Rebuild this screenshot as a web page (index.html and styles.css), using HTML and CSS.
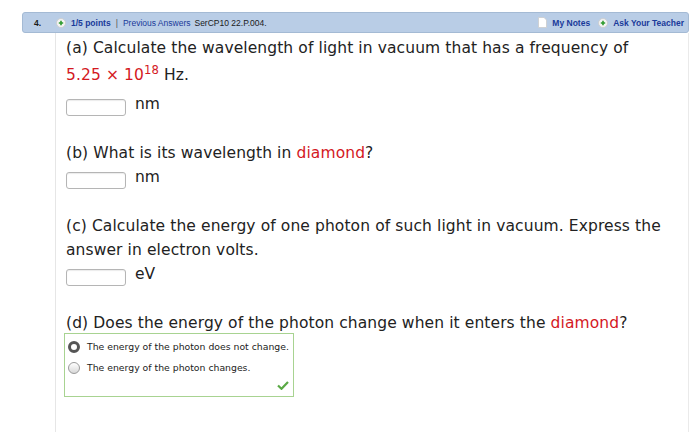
FILE: index.html
```html
<!DOCTYPE html>
<html>
<head>
<meta charset="utf-8">
<link rel="stylesheet" href="styles.css">
</head>
<body>
<div class="question">
  <div class="qbar">
    <span class="qnum">4.</span>
    <span class="plus"><svg width="10" height="10" viewBox="0 0 10 10"><circle cx="5" cy="5" r="4.5" fill="#f4f4f4" stroke="#c9c9c9" stroke-width="0.8"/><path d="M5 2.8v4.4M2.8 5h4.4" stroke="#2e9b2e" stroke-width="1.6"/></svg></span>
    <span class="points">1/5 points</span>
    <span class="sep">|</span>
    <span class="prev">Previous Answers</span>
    <span class="code">SerCP10 22.P.004.</span>
    <span class="spacer"></span>
    <span class="note"><svg width="9" height="11" viewBox="0 0 9 11"><path d="M0.5 0.5h5.5l2.5 2.5v7.5h-8z" fill="#fff" stroke="#ccc" stroke-width="0.8"/></svg></span>
    <span class="link">My Notes</span>
    <span class="plus plus2"><svg width="10" height="10" viewBox="0 0 10 10"><circle cx="5" cy="5" r="4.5" fill="#f4f4f4" stroke="#c9c9c9" stroke-width="0.8"/><path d="M5 2.8v4.4M2.8 5h4.4" stroke="#2e9b2e" stroke-width="1.6"/></svg></span>
    <span class="link">Ask Your Teacher</span>
  </div>
  <div class="body">
    <div class="content">
      <p class="para first"><span class="ln">(a) Calculate the wavelength of light in vacuum that has a frequency of</span><span class="ln ln2"><span class="red">5.25 × 10<sup>18</sup></span> Hz.</span></p>
      <div class="answer a1"><span class="box"></span><span class="unit">nm</span></div>
      <p class="para sec">(b) What is its wavelength in <span class="red">diamond</span>?</p>
      <div class="answer"><span class="box"></span><span class="unit">nm</span></div>
      <p class="para sec">(c) Calculate the energy of one photon of such light in vacuum. Express the answer in electron volts.</p>
      <div class="answer"><span class="box"></span><span class="unit">eV</span></div>
      <p class="para sec">(d) Does the energy of the photon change when it enters the <span class="red">diamond</span>?</p>
      <div class="choices">
        <div class="choice"><span class="radio on"></span>The energy of the photon does not change.</div>
        <div class="choice"><span class="radio"></span>The energy of the photon changes.</div>
        <div class="check"><svg width="12" height="9" viewBox="0 0 12 9"><path d="M1 4.5l3.5 3.3L11 1" fill="none" stroke="#5aa945" stroke-width="2.2"/></svg></div>
      </div>
    </div>
  </div>
</div>
</body>
</html>
```
FILE: styles.css
```css
html, body { margin: 0; padding: 0; background: #fff; }
body { width: 700px; height: 432px; overflow: hidden; font-family: "DejaVu Sans", Verdana, sans-serif; color: #222; }
.question { padding: 12px 11px 0 22px; }
.qbar {
  height: 19px; background: #b9cde6; border: 1px solid #a4bad4; border-radius: 3px;
  display: flex; align-items: center; font-family: "Liberation Sans", Arial, sans-serif; font-size: 8.5px;
  padding: 0 4px 0 11px; color: #1a1a1a;
}
.qnum { font-weight: bold; width: 22px; }
.plus { display: inline-flex; margin-right: 5px; }
.plus svg, .note svg { display: block; }
.points { font-weight: bold; color: #1a3a9a; }
.sep { color: #555; margin: 0 5px; }
.prev { color: #1a3a9a; margin-right: 4px; }
.code { color: #1a1a1a; }
.spacer { flex: 1; }
.note { display: inline-flex; margin-right: 5px; }
.link { font-weight: bold; color: #1a3a9a; }
.plus2 { margin-left: 8px; }
.body { margin-left: 33px; border-left: 1px solid #e6e6e6; border-right: 1px solid #eaeaea; height: 420px; }
.content { padding: 3px 0 0 10px; }
.para { margin: 0; font-size: 15.5px; line-height: 24px; color: #222; letter-spacing: 0.1px; }
.ln { display: block; }
.ln2 { padding-top: 3px; }
.para.sec { margin-top: 21px; }
.red { color: #d4191f; }
sup { font-size: 0.75em; line-height: 0; vertical-align: 6px; }
.answer { display: flex; align-items: center; margin-top: 2px; height: 26px; }
.answer.a1 { margin-top: 7px; }
.box { width: 58px; height: 15px; border: 1px solid #b5b5b5; border-radius: 3px; background: #fff; box-shadow: inset 0 1px 1px rgba(0,0,0,0.08); }
.unit { font-size: 15.5px; margin-left: 9px; margin-top: -6px; }
.choices { width: 230px; height: 64px; border: 1px solid #a8d391; margin: -2px 0 0 -2px; position: relative; padding: 2px 0 0 3px; box-sizing: border-box; font-size: 9.3px; }
.choice { display: flex; align-items: center; height: 21px; }
.radio { width: 12px; height: 12px; border-radius: 50%; border: 1px solid #9a9a9a; background: linear-gradient(#fff, #d8d8d8); margin-right: 7px; box-sizing: border-box; }
.radio.on { border: 3.5px solid #555; background: #fff; }
.check { position: absolute; right: 4px; bottom: 6px; }
.check svg { display: block; }
```
